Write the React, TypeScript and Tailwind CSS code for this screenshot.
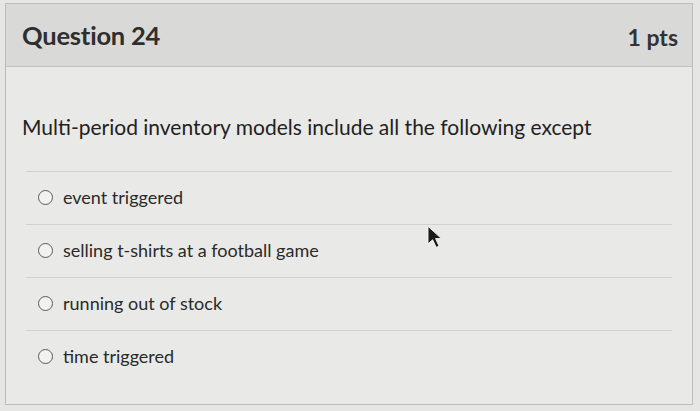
import React from "react";

const OPTIONS = [
    "event triggered",
    "selling t-shirts at a football game",
    "running out of stock",
    "time triggered",
];

function Cursor() {
    return (
        <svg
            width="22"
            height="28"
            viewBox="0 0 18 24"
            className="absolute left-[424px] top-[224px]"
        >
            <path
                d="M3 2 L3 17 L7 13.5 L10 20 L12.5 19 L9.5 12.5 L14.5 12.5 Z"
                fill="#1a1a1a"
                stroke="#f4f4f4"
                strokeWidth="0.8"
                strokeLinejoin="round"
            />
        </svg>
    );
}

export default function App() {
    return (
        <div
            className="relative w-[700px] h-[411px] bg-[#e6e6e4] pt-[3px] pl-[5px] overflow-hidden"
            style={{ fontFamily: "Lato, 'Open Sans', sans-serif" }}
        >
            <div className="w-[688px] h-[402px] border border-[#bdbdbb] bg-[#e9e9e7] flex flex-col">
                <div className="h-[63px] bg-[#d9d9d7] border-b border-[#c2c2c0] flex items-center justify-between pl-[16px] pr-[14px]">
                    <h2 className="text-[25.5px] font-bold text-[#2e2e2e] tracking-[-0.2px]">Question 24</h2>
                    <span className="text-[23px] font-bold text-[#333] pt-[4px]">1 pts</span>
                </div>
                <div className="pt-[44px] pl-[16px] text-[21px] text-[#222]">
                    Multi-period inventory models include all the following except
                </div>
                <div className="mt-[28px] ml-[20px] mr-[20px] flex flex-col">
                    {OPTIONS.map((opt) => (
                        <div
                            key={opt}
                            className="h-[53px] flex items-center gap-[10px] pl-[12px] border-t border-[#d2d2d0]"
                        >
                            <span className="w-[15px] h-[15px] rounded-full border-[1.5px] border-[#5a5a5a] bg-[#f2f2f0] shrink-0" />
                            <span className="text-[18px] text-[#2a2a2a] pb-[1px]">{opt}</span>
                        </div>
                    ))}
                </div>
            </div>
            <Cursor />
        </div>
    );
}
